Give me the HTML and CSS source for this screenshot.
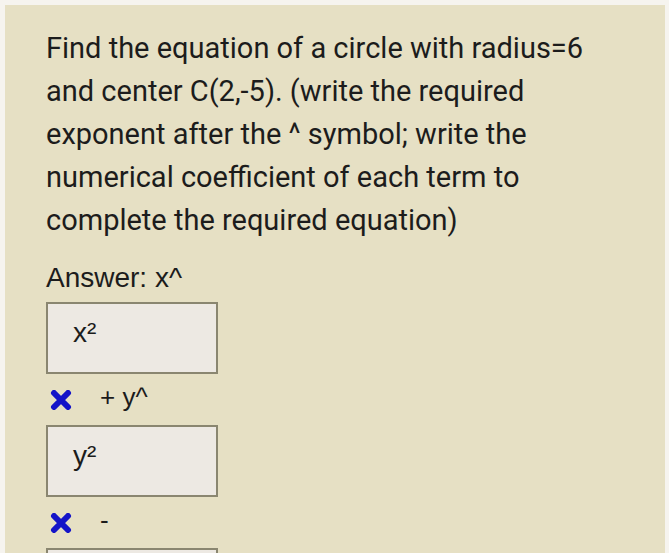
FILE: index.html
```html
<!DOCTYPE html>
<html>
<head>
<meta charset="utf-8">
<link rel="stylesheet" href="styles.css">
</head>
<body>
<div class="panel">
  <p class="question">Find the equation of a circle with radius=6 and center C(2,-5). (write the required exponent after the ^ symbol; write the numerical coefficient of each term to complete the required equation)</p>
  <div class="answer">Answer: x^</div>
  <div class="box">x²</div>
  <div class="row">
    <svg class="xicon" viewBox="0 0 22 20" width="22" height="20"><path d="M4 3 L18 17 M18 3 L4 17" stroke="#1414c8" stroke-width="6" stroke-linecap="round"/></svg>
    <span class="op">+ y^</span>
  </div>
  <div class="box">y²</div>
  <div class="row">
    <svg class="xicon" viewBox="0 0 22 20" width="22" height="20"><path d="M4 3 L18 17 M18 3 L4 17" stroke="#1414c8" stroke-width="6" stroke-linecap="round"/></svg>
    <span class="op">-</span>
  </div>
  <div class="box"></div>
</div>
</body>
</html>
```
FILE: styles.css
```css
html, body {
  margin: 0;
  padding: 0;
  background: #f6f4ef;
  height: 553px;
  overflow: hidden;
}
.panel {
  margin: 5px 4px 0 5px;
  background: #e6e0c4;
  height: 548px;
  overflow: hidden;
  padding: 22px 0 0 41px;
  box-sizing: border-box;
  font-family: Roboto, "Liberation Sans", sans-serif;
  color: #1c1c1c;
}
.question {
  margin: 0;
  width: 580px;
  font-size: 29px;
  line-height: 43px;
}
.answer {
  margin-top: 19px;
  font-size: 28px;
  line-height: 34px;
  font-family: "Liberation Sans", Arial, sans-serif;
}
.box {
  margin-top: 7px;
  width: 172px;
  height: 72px;
  box-sizing: border-box;
  border: 2px solid #8a8670;
  background: #ede9e3;
  padding: 13px 0 0 25px;
  font-family: "Liberation Sans", Arial, sans-serif;
  font-size: 28px;
  line-height: 32px;
}
.box + .row + .box { margin-top: 0; }
.row {
  height: 51px;
  display: flex;
  align-items: center;
  padding-left: 4px;
}
.xicon { flex: none; }
.op {
  margin-left: 28px;
  font-family: "Liberation Sans", Arial, sans-serif;
  font-size: 26px;
  line-height: 30px;
  margin-top: -6px;
}
```
